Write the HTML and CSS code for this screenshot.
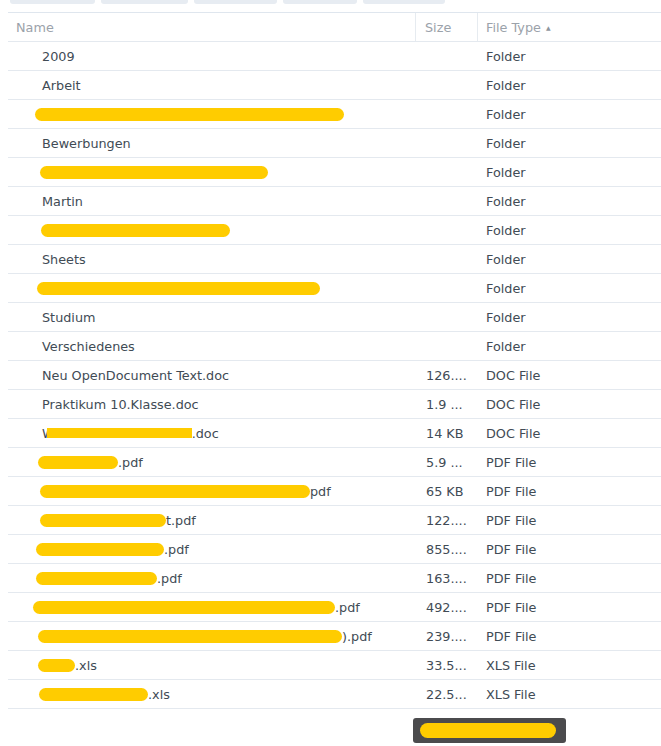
FILE: index.html
```html
<!DOCTYPE html>
<html lang="de">
<head>
<meta charset="utf-8">
<title>Files</title>
<link rel="stylesheet" href="styles.css">
</head>
<body>
<div class="toolbar">
  <span class="tb-btn b1"></span>
  <span class="tb-btn b2"></span>
  <span class="tb-btn b3"></span>
  <span class="tb-btn b4"></span>
  <span class="tb-btn b5"></span>
</div>
<div class="grid">
  <div class="head">
    <div class="hcell c-name">Name</div>
    <div class="hcell c-size">Size</div>
    <div class="hcell c-type">File Type <span class="sort">&#9650;</span></div>
  </div>
  <div class="row"><div class="cell c-name">2009</div><div class="cell c-size"></div><div class="cell c-type">Folder</div></div>
  <div class="row"><div class="cell c-name">Arbeit</div><div class="cell c-size"></div><div class="cell c-type">Folder</div></div>
  <div class="row"><div class="cell c-name"><span class="redact" style="margin-left:-7px;width:309px"></span></div><div class="cell c-size"></div><div class="cell c-type">Folder</div></div>
  <div class="row"><div class="cell c-name">Bewerbungen</div><div class="cell c-size"></div><div class="cell c-type">Folder</div></div>
  <div class="row"><div class="cell c-name"><span class="redact" style="margin-left:-2px;width:228px"></span></div><div class="cell c-size"></div><div class="cell c-type">Folder</div></div>
  <div class="row"><div class="cell c-name">Martin</div><div class="cell c-size"></div><div class="cell c-type">Folder</div></div>
  <div class="row"><div class="cell c-name"><span class="redact" style="margin-left:-1px;width:189px"></span></div><div class="cell c-size"></div><div class="cell c-type">Folder</div></div>
  <div class="row"><div class="cell c-name">Sheets</div><div class="cell c-size"></div><div class="cell c-type">Folder</div></div>
  <div class="row"><div class="cell c-name"><span class="redact" style="margin-left:-5px;width:283px"></span></div><div class="cell c-size"></div><div class="cell c-type">Folder</div></div>
  <div class="row"><div class="cell c-name">Studium</div><div class="cell c-size"></div><div class="cell c-type">Folder</div></div>
  <div class="row"><div class="cell c-name">Verschiedenes</div><div class="cell c-size"></div><div class="cell c-type">Folder</div></div>
  <div class="row"><div class="cell c-name">Neu OpenDocument Text.doc</div><div class="cell c-size">126....</div><div class="cell c-type">DOC File</div></div>
  <div class="row"><div class="cell c-name">Praktikum 10.Klasse.doc</div><div class="cell c-size">1.9 ...</div><div class="cell c-type">DOC File</div></div>
  <div class="row"><div class="cell c-name">W<span class="redact flat" style="margin-left:-8px;width:145px"></span>.doc</div><div class="cell c-size">14 KB</div><div class="cell c-type">DOC File</div></div>
  <div class="row"><div class="cell c-name"><span class="redact" style="margin-left:-4px;width:80px"></span>.pdf</div><div class="cell c-size">5.9 ...</div><div class="cell c-type">PDF File</div></div>
  <div class="row"><div class="cell c-name"><span class="redact" style="margin-left:-2px;width:270px"></span>&#8203;pdf</div><div class="cell c-size">65 KB</div><div class="cell c-type">PDF File</div></div>
  <div class="row"><div class="cell c-name"><span class="redact" style="margin-left:-2px;width:126px"></span>t.pdf</div><div class="cell c-size">122....</div><div class="cell c-type">PDF File</div></div>
  <div class="row"><div class="cell c-name"><span class="redact" style="margin-left:-6px;width:128px"></span>.pdf</div><div class="cell c-size">855....</div><div class="cell c-type">PDF File</div></div>
  <div class="row"><div class="cell c-name"><span class="redact" style="margin-left:-6px;width:121px"></span>.pdf</div><div class="cell c-size">163....</div><div class="cell c-type">PDF File</div></div>
  <div class="row"><div class="cell c-name"><span class="redact" style="margin-left:-9px;width:302px"></span>.pdf</div><div class="cell c-size">492....</div><div class="cell c-type">PDF File</div></div>
  <div class="row"><div class="cell c-name"><span class="redact" style="margin-left:-4px;width:304px"></span>).pdf</div><div class="cell c-size">239....</div><div class="cell c-type">PDF File</div></div>
  <div class="row"><div class="cell c-name"><span class="redact" style="margin-left:-4px;width:37px"></span>.xls</div><div class="cell c-size">33.5...</div><div class="cell c-type">XLS File</div></div>
  <div class="row"><div class="cell c-name"><span class="redact" style="margin-left:-3px;width:109px"></span>.xls</div><div class="cell c-size">22.5...</div><div class="cell c-type">XLS File</div></div>
</div>
<div class="tooltip"><span class="redact tip-redact"></span></div>
</body>
</html>
```
FILE: styles.css
```css
* { box-sizing: border-box; }
html, body {
  margin: 0;
  padding: 0;
  background: #ffffff;
}
body {
  font-family: "DejaVu Sans", Verdana, sans-serif;
  font-size: 12.8px;
  color: #414b55;
  position: relative;
  height: 746px;
  overflow: hidden;
}
.toolbar {
  display: flex;
  gap: 6px;
  height: 4px;
  padding-left: 10px;
  overflow: hidden;
}
.tb-btn {
  height: 4px;
  background: #e7ecf2;
  border-radius: 0 0 3px 3px;
  flex: none;
}
.b1 { width: 85px; }
.b2 { width: 87px; }
.b3 { width: 83px; }
.b4 { width: 74px; }
.b5 { width: 82px; }

.grid {
  margin: 8px 0 0 8px;
  border-top: 1px solid #dfe6ee;
}
.head, .row {
  display: grid;
  grid-template-columns: 408px 62px 1fr;
  border-bottom: 1px solid #e4e9ef;
}
.head { height: 29px; }
.row { height: 29px; }
.hcell {
  display: flex;
  align-items: center;
  color: #9ba2aa;
  font-size: 12.8px;
}
.head .c-name { padding-left: 8px; border-right: 1px solid #e6ebf0; }
.head .c-size { padding-left: 9px; border-right: 1px solid #e6ebf0; }
.head .c-type { padding-left: 8px; }
.sort { font-size: 6px; margin-left: 5px; color: #8d959d; }
.cell {
  display: flex;
  align-items: center;
  white-space: nowrap;
  overflow: visible;
}
.row .c-name { padding-left: 34px; }
.row .c-size { padding-left: 10px; }
.row .c-type { padding-left: 8px; }

.redact {
  display: inline-block;
  height: 13px;
  background: #ffcc00;
  border-radius: 7px;
  flex: none;
}
.redact.flat { border-radius: 0; height: 10px; }

.tooltip {
  position: absolute;
  left: 413px;
  top: 718px;
  width: 153px;
  height: 25px;
  background: #4b4b4d;
  border-radius: 3px;
  display: flex;
  align-items: center;
  padding-left: 7px;
}
.tip-redact { width: 136px; height: 15px; border-radius: 8px; }
```
